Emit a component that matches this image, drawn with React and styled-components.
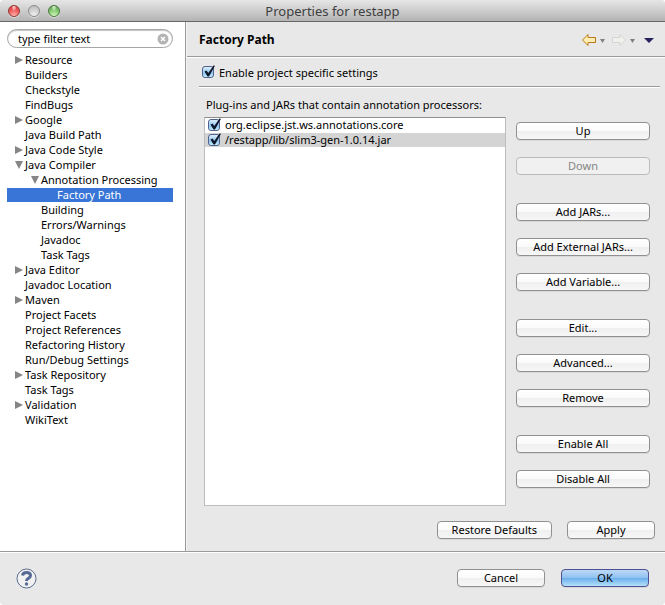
import React from 'react';
import styled, { createGlobalStyle, css } from 'styled-components';

const GlobalStyle = createGlobalStyle`
  * {
    box-sizing: border-box;
  }

  body {
    background: white;
    color: black;
    font-family: 'Noto Sans', 'Open Sans', sans-serif;
    font-size: 11px;
    line-height: 15px;
    margin: 0;
  }

  button,
  input {
    color: inherit;
    font: inherit;
    margin: 0;
  }
`;

const Window = styled.div`
  background: #e8e8e8;
  border-radius: 4px;
  display: flex;
  flex-direction: column;
  min-height: 100vh;
  overflow: hidden;
`;

const TitleBar = styled.header`
  align-items: center;
  background: linear-gradient(#e6e6e6, #cdcdcd 50%, #b3b3b3);
  border-bottom: 1px solid #686868;
  display: grid;
  grid-template-columns: 1fr auto 1fr;
  height: 22px;
  padding: 0 8px;
`;

const Title = styled.h1`
  color: #404040;
  font-size: 13px;
  font-weight: 400;
  line-height: 20px;
  margin: 0;
`;

const Lights = styled.div`
  display: flex;
  gap: 8px;
`;

const Light = styled.button`
  background: ${({ $tone }) => $tone};
  border: 1px solid ${({ $edge }) => $edge};
  border-radius: 50%;
  box-shadow: 0 1px 0 rgba(255, 255, 255, 0.5);
  height: 12px;
  padding: 0;
  width: 12px;
`;

const Body = styled.div`
  display: flex;
  flex: 1;
`;

const Sidebar = styled.nav`
  background: white;
  border-right: 1px solid #9a9a9a;
  flex: none;
  padding: 7px 12px 0 7px;
  width: 186px;
`;

const Search = styled.div`
  align-items: center;
  background: white;
  border: 1px solid #a6a6a6;
  border-radius: 10px;
  box-shadow: inset 0 1px 1px #c4c4c4;
  display: flex;
  height: 19px;
  margin-bottom: 5px;
  padding: 0 3px 0 10px;
`;

const SearchInput = styled.input`
  background: none;
  border: none;
  flex: 1;
  min-width: 0;
  outline: none;
  padding: 0;
`;

const ClearButton = styled.button`
  background: none;
  border: none;
  display: flex;
  padding: 0;
`;

const Tree = styled.ul`
  list-style: none;
  margin: 0;
  padding: 0;
`;

const rowStyle = css`
  background-clip: padding-box;
  border-bottom: 1px solid transparent;
  height: 15px;
  line-height: 14px;
`;

const TreeRow = styled.li`
  ${rowStyle}
  align-items: center;
  display: flex;
  gap: 2px;
  padding-left: ${({ $level }) => 8 + $level * 16}px;
  white-space: nowrap;

  ${({ $selected }) =>
    $selected &&
    css`
      background-color: #3875d7;
      color: white;
    `}
`;

const Twisty = styled.svg`
  fill: #858585;
  flex: none;
  height: 8px;
  width: 8px;
`;

const Page = styled.main`
  border-left: 1px solid #f4f4f4;
  display: flex;
  flex: 1;
  flex-direction: column;
  min-width: 0;
`;

const PageHeader = styled.div`
  align-items: center;
  border-bottom: 1px solid #9a9a9a;
  box-shadow: 0 1px 0 white;
  display: flex;
  height: 35px;
  justify-content: space-between;
  padding: 0 10px 0 12px;
`;

const PageTitle = styled.h2`
  font-size: 12px;
  font-weight: 700;
  margin: 0;
`;

const Tools = styled.div`
  align-items: center;
  display: flex;
  gap: 2px;
`;

const ToolButton = styled.button`
  background: none;
  border: none;
  display: flex;
  padding: 0;
`;

const Content = styled.div`
  display: flex;
  flex: 1;
  flex-direction: column;
  padding: 0 5px 12px 12px;
`;

const CheckLabel = styled.label`
  align-items: center;
  display: flex;
  gap: 3px;
  height: 14px;
`;

const EnableRow = styled.div`
  border-bottom: 1px solid #9a9a9a;
  box-shadow: 0 1px 0 white;
  height: 30px;
  padding: 8px 3px 0;
`;

const CheckMark = styled.span`
  display: inline-grid;
  flex: none;
  height: 14px;
  width: 14px;

  & > * {
    grid-area: 1 / 1;
  }

  & svg {
    pointer-events: none;
    position: relative;
  }
`;

const CheckInput = styled.input`
  align-self: center;
  appearance: none;
  background: linear-gradient(#dceefb, #8fc4ef 60%, #c5f0ff);
  border: 1px solid #51628c;
  border-radius: 3px;
  height: 12px;
  width: 12px;
`;

const Caption = styled.div`
  padding: 10px 7px 5px;
`;

const Columns = styled.div`
  display: flex;
  flex: 1;
  gap: 10px;
  padding: 0 10px 0 5px;
`;

const JarList = styled.ul`
  background: white;
  border: 1px solid #bdbdbd;
  border-top-color: #8e8e8e;
  flex: 1;
  list-style: none;
  margin: 0;
  padding: 0;
`;

const JarRow = styled.li`
  ${rowStyle}
  background-color: ${({ $selected }) => ($selected ? '#d4d4d4' : 'transparent')};
  padding: 0 3px;
`;

const Actions = styled.div`
  display: flex;
  flex: none;
  flex-direction: column;
  gap: 28px;
  padding: 5px 0 17px;
  width: 134px;
`;

const ActionGroup = styled.div`
  display: flex;
  flex-direction: column;
  gap: 17px;
`;

const Button = styled.button`
  background: linear-gradient(white, #fafafa 50%, #efefef 51%, #f7f7f7);
  border: 1px solid #909090;
  border-radius: 4px;
  box-shadow: 0 1px 0 #d8d8d8;
  height: 18px;
  line-height: 16px;
  min-width: 88px;
  padding: 0 14px;

  &:disabled {
    background: #f0f0f0;
    border-color: #bbb;
    box-shadow: none;
    color: #858585;
  }

  ${({ $primary }) =>
    $primary &&
    css`
      background: linear-gradient(#bdd9f6, #8fc1f1 49%, #69ade9 50%, #b4e2fb);
      border-color: #4d5093;
    `}
`;

const PageFooter = styled.div`
  display: flex;
  gap: 15px;
  justify-content: flex-end;
  padding: 15px 5px 0 0;
`;

const BottomBar = styled.footer`
  align-items: center;
  border-top: 1px solid #9a9a9a;
  box-shadow: inset 0 1px 0 white;
  display: flex;
  gap: 16px;
  height: 54px;
  padding: 0 16px 1px;
`;

const HelpButton = styled(ToolButton)`
  margin-right: auto;
`;

const treeItems = [
  { label: 'Resource', open: false },
  { label: 'Builders' },
  { label: 'Checkstyle' },
  { label: 'FindBugs' },
  { label: 'Google', open: false },
  { label: 'Java Build Path' },
  { label: 'Java Code Style', open: false },
  { label: 'Java Compiler', open: true },
  { label: 'Annotation Processing', level: 1, open: true },
  { label: 'Factory Path', level: 2, selected: true },
  { label: 'Building', level: 1 },
  { label: 'Errors/Warnings', level: 1 },
  { label: 'Javadoc', level: 1 },
  { label: 'Task Tags', level: 1 },
  { label: 'Java Editor', open: false },
  { label: 'Javadoc Location' },
  { label: 'Maven', open: false },
  { label: 'Project Facets' },
  { label: 'Project References' },
  { label: 'Refactoring History' },
  { label: 'Run/Debug Settings' },
  { label: 'Task Repository', open: false },
  { label: 'Task Tags' },
  { label: 'Validation', open: false },
  { label: 'WikiText' },
];

const jars = [
  { name: 'org.eclipse.jst.ws.annotations.core' },
  { name: '/restapp/lib/slim3-gen-1.0.14.jar', selected: true },
];

const actionGroups = [
  ['Up', 'Down'],
  ['Add JARs...', 'Add External JARs...', 'Add Variable...'],
  ['Edit...', 'Advanced...', 'Remove'],
  ['Enable All', 'Disable All'],
];

const Checkbox = ({ children }) => (
  <CheckLabel>
    <CheckMark>
      <CheckInput type="checkbox" defaultChecked />
      <svg width="14" height="14" viewBox="0 0 14 14">
        <path d="M2.500 6.500l2-1 1.800 2.500L11.500.5l1.500.3L7 11.500H5.500z" fill="#10182c" />
      </svg>
    </CheckMark>
    {children}
  </CheckLabel>
);

const TreeItem = ({ label, level = 0, open, selected }) => (
  <TreeRow $level={level} $selected={selected}>
    <Twisty viewBox="0 0 8 8">
      {open === false && <path d="M0 0l8 4-8 4z" />}
      {open && <path d="M0 0h8L4 8z" />}
    </Twisty>
    {label}
  </TreeRow>
);

const HistoryArrow = ({ fill, stroke, flip }) => (
  <svg width="16" height="14" viewBox="0 0 16 14">
    <path
      d="M1.500 8l5.500-5.500v3h7.500v5H7v3z"
      fill={fill}
      stroke={stroke}
      transform={flip ? 'translate(16 0) scale(-1 1)' : undefined}
    />
  </svg>
);

const SmallArrow = () => (
  <svg width="12" height="14" viewBox="0 0 12 14">
    <path d="M3 7h5l-2.500 4z" fill="#808080" />
  </svg>
);

const App = () => (
  <>
    <GlobalStyle />
    <Window>
      <TitleBar>
        <Lights>
          <Light
            aria-label="Close"
            $edge="#8f3b39"
            $tone="radial-gradient(ellipse at 50% 10%, #ffe3df, transparent 35%), radial-gradient(circle at 50% 100%, #ffb9b0, #ee5c5a 55%, #cf3a3c)"
          />
          <Light
            aria-label="Minimize"
            $edge="#8c8c8c"
            $tone="radial-gradient(circle at 50% 100%, #f4f4f4, #cfcfcf 60%, #b8b8b8)"
          />
          <Light
            aria-label="Zoom"
            $edge="#4c7a40"
            $tone="radial-gradient(ellipse at 50% 10%, #ecfbe4, transparent 35%), radial-gradient(circle at 50% 100%, #d8fbc0, #84c970 55%, #559a4a)"
          />
        </Lights>
        <Title>Properties for restapp</Title>
      </TitleBar>
      <Body>
        <Sidebar>
          <Search>
            <SearchInput aria-label="Filter" defaultValue="type filter text" />
            <ClearButton aria-label="Clear">
              <svg width="12" height="12" viewBox="0 0 12 12">
                <circle cx="6" cy="6" r="5.500" fill="#b3b3b3" />
                <path d="M4 4l4 4M8 4l-4 4" stroke="white" strokeWidth="1.500" />
              </svg>
            </ClearButton>
          </Search>
          <Tree>
            {treeItems.map((item, i) => (
              <TreeItem key={i} {...item} />
            ))}
          </Tree>
        </Sidebar>
        <Page>
          <PageHeader>
            <PageTitle>Factory Path</PageTitle>
            <Tools>
              <ToolButton aria-label="Back">
                <HistoryArrow fill="#ffeeb0" stroke="#b8771c" />
                <SmallArrow />
              </ToolButton>
              <ToolButton aria-label="Forward">
                <HistoryArrow fill="#f0f0ec" stroke="#d3d3d0" flip />
                <SmallArrow />
              </ToolButton>
              <ToolButton aria-label="Menu">
                <svg width="14" height="14" viewBox="0 0 14 14">
                  <path d="M3 6h10L8 11z" fill="#25215c" />
                </svg>
              </ToolButton>
            </Tools>
          </PageHeader>
          <Content>
            <EnableRow>
              <Checkbox>Enable project specific settings</Checkbox>
            </EnableRow>
            <Caption>Plug-ins and JARs that contain annotation processors:</Caption>
            <Columns>
              <JarList>
                {jars.map(({ name, selected }) => (
                  <JarRow key={name} $selected={selected}>
                    <Checkbox>{name}</Checkbox>
                  </JarRow>
                ))}
              </JarList>
              <Actions>
                {actionGroups.map((group) => (
                  <ActionGroup key={group[0]}>
                    {group.map((label) => (
                      <Button key={label} disabled={label === 'Down'}>
                        {label}
                      </Button>
                    ))}
                  </ActionGroup>
                ))}
              </Actions>
            </Columns>
            <PageFooter>
              <Button>Restore Defaults</Button>
              <Button>Apply</Button>
            </PageFooter>
          </Content>
        </Page>
      </Body>
      <BottomBar>
        <HelpButton aria-label="Help">
          <svg width="21" height="21" viewBox="0 0 21 21" fill="none">
            <circle cx="10.500" cy="10.500" r="9.500" fill="#f1f1f1" stroke="#5a6c90" />
            <path
              d="M6.500 7.500c.5-4 8-4 8 0 0 3-4 2.500-4 5.500"
              stroke="#566a96"
              strokeWidth="3"
            />
            <circle cx="10.500" cy="16" r="1.700" fill="#566a96" />
          </svg>
        </HelpButton>
        <Button>Cancel</Button>
        <Button $primary>OK</Button>
      </BottomBar>
    </Window>
  </>
);

export default App;
